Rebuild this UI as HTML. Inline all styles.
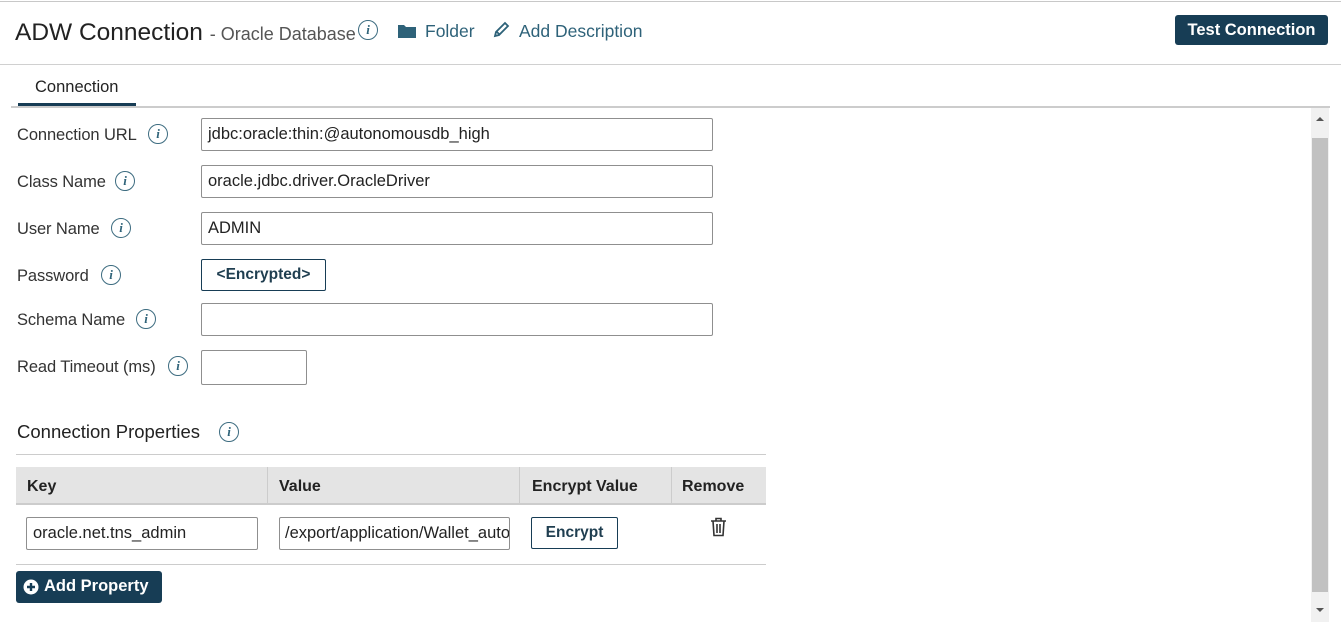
<!DOCTYPE html>
<html><head><style>
*{box-sizing:border-box;margin:0;padding:0}
body{width:1341px;height:630px;overflow:hidden;background:#fff;font-family:"Liberation Sans",sans-serif;color:#333;position:relative}
.a{position:absolute}
.lbl{font-size:16.5px;color:#333;letter-spacing:-0.1px}
.inp{position:absolute;border:1px solid #8f8f8f;border-radius:2px;height:33px;font-size:16.5px;padding:6px 6px;color:#222;background:#fff;white-space:nowrap;overflow:hidden}
.info{position:absolute;width:20px;height:20px;border:1.5px solid #3d6c80;border-radius:50%;color:#2f6379;font:italic bold 13px "Liberation Serif",serif;text-align:center;line-height:17px}
.btn{position:absolute;background:#173d55;color:#fff;font-weight:bold;border-radius:3px;font-size:16.5px;text-align:center}
.obtn{position:absolute;border:1px solid #173d55;border-radius:2px;color:#1f3e50;font-size:15.5px;font-weight:bold;text-align:center;background:#fff}
</style></head><body>
<div class="a" style="left:0;top:1px;width:1341px;height:1px;background:#c8c8c8"></div>
<div class="a" style="left:15px;top:19px;font-size:24.5px;color:#222">ADW Connection <span style="font-size:18px;color:#555">- Oracle Database</span></div>
<div class="info" style="left:358px;top:20px">i</div>
<svg class="a" style="left:398px;top:23px" width="18" height="15" viewBox="0 0 18 15"><path d="M0 2h6l2 2h10v11H0z" fill="#2e6279"/></svg>
<div class="a" style="left:425px;top:21px;font-size:17.5px;color:#2e6279">Folder</div>
<svg class="a" style="left:492px;top:21px" width="18" height="18" viewBox="0 0 18 18"><path d="M3 15l1-4 9-9 3 3-9 9z M5 11l2 2" fill="none" stroke="#2e6279" stroke-width="1.8"/></svg>
<div class="a" style="left:519px;top:21px;font-size:17.5px;color:#2e6279">Add Description</div>
<div class="btn" style="left:1175px;top:15px;width:153px;height:30px;line-height:30px">Test Connection</div>
<div class="a" style="left:0;top:64px;width:1341px;height:1px;background:#d0d0d0"></div>
<div class="a" style="left:35px;top:78px;font-size:16.5px;color:#222">Connection</div>
<div class="a" style="left:11px;top:106px;width:1319px;height:2px;background:#ccc"></div>
<div class="a" style="left:18px;top:103px;width:118px;height:3px;background:#173d55"></div>

<div class="a lbl" style="left:17px;top:126px">Connection URL</div><div class="info" style="left:148px;top:124px">i</div>
<div class="inp" style="left:201px;top:118px;width:512px">jdbc:oracle:thin:@autonomousdb_high</div>
<div class="a lbl" style="left:17px;top:173px">Class Name</div><div class="info" style="left:115px;top:171px">i</div>
<div class="inp" style="left:201px;top:165px;width:512px">oracle.jdbc.driver.OracleDriver</div>
<div class="a lbl" style="left:17px;top:220px">User Name</div><div class="info" style="left:111px;top:218px">i</div>
<div class="inp" style="left:201px;top:212px;width:512px">ADMIN</div>
<div class="a lbl" style="left:17px;top:267px">Password</div><div class="info" style="left:101px;top:265px">i</div>
<div class="obtn" style="left:201px;top:259px;width:125px;height:32px;line-height:30px">&lt;Encrypted&gt;</div>
<div class="a lbl" style="left:17px;top:311px">Schema Name</div><div class="info" style="left:136px;top:309px">i</div>
<div class="inp" style="left:201px;top:303px;width:512px"></div>
<div class="a lbl" style="left:17px;top:358px">Read Timeout (ms)</div><div class="info" style="left:168px;top:356px">i</div>
<div class="inp" style="left:201px;top:350px;width:106px;height:35px"></div>

<div class="a" style="left:17px;top:421px;font-size:18.5px;color:#222">Connection Properties</div><div class="info" style="left:219px;top:422px">i</div>
<div class="a" style="left:16px;top:454px;width:750px;height:1px;background:#ccc"></div>
<div class="a" style="left:16px;top:467px;width:750px;height:38px;background:#e4e4e4;border-bottom:2px solid #ccc"></div>
<div class="a" style="left:267px;top:467px;width:1px;height:38px;background:#ccc"></div>
<div class="a" style="left:519px;top:467px;width:1px;height:38px;background:#ccc"></div>
<div class="a" style="left:671px;top:467px;width:1px;height:38px;background:#ccc"></div>
<div class="a" style="left:27px;top:478px;font-weight:bold;font-size:16px;color:#222">Key</div>
<div class="a" style="left:279px;top:478px;font-weight:bold;font-size:16px;color:#222">Value</div>
<div class="a" style="left:532px;top:478px;font-weight:bold;font-size:16px;color:#222">Encrypt Value</div>
<div class="a" style="left:682px;top:478px;font-weight:bold;font-size:16px;color:#222">Remove</div>
<div class="inp" style="left:26px;top:517px;width:232px">oracle.net.tns_admin</div>
<div class="inp" style="left:279px;top:517px;width:231px;padding-left:5px">/export/application/Wallet_autonomous</div>
<div class="obtn" style="left:531px;top:517px;width:87px;height:32px;line-height:30px">Encrypt</div>
<svg class="a" style="left:710px;top:517px" width="17" height="20" viewBox="0 0 17 20"><path d="M1 4h15M6 4V1.5h5V4M3 4l1 14.5h9L14 4M7 7v9M10 7v9" fill="none" stroke="#333" stroke-width="1.6"/></svg>
<div class="a" style="left:16px;top:564px;width:750px;height:1px;background:#ccc"></div>
<div class="btn" style="left:16px;top:571px;width:146px;height:32px;line-height:31px;text-align:left;padding-left:28px">Add Property</div>
<svg class="a" style="left:23px;top:579px" width="16" height="16" viewBox="0 0 16 16"><circle cx="8" cy="8" r="7.5" fill="#fff"/><path d="M8 4v8M4 8h8" stroke="#173d55" stroke-width="2.4"/></svg>

<div class="a" style="left:1311px;top:108px;width:18px;height:514px;background:#f1f1f1"></div>
<div class="a" style="left:1312px;top:138px;width:16px;height:454px;background:#c1c1c1"></div>
<svg class="a" style="left:1314px;top:114px" width="12" height="8"><path d="M2 7l4-4 4 4z" fill="#555"/></svg>
<svg class="a" style="left:1314px;top:606px" width="12" height="8"><path d="M2 2l4 4 4-4z" fill="#555"/></svg>
</body></html>
